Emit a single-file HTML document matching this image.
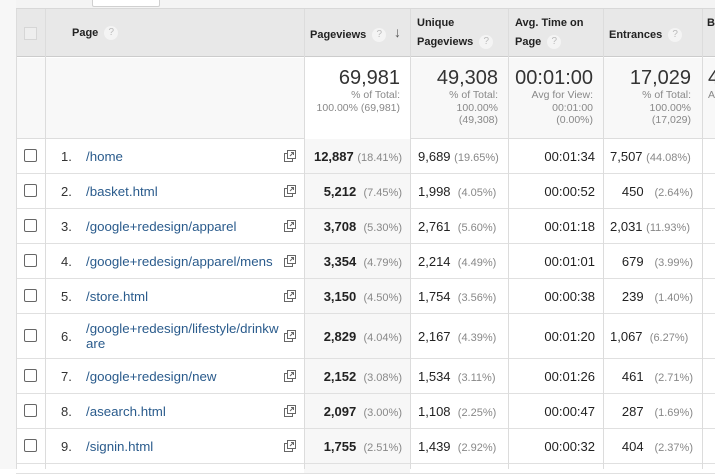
<!DOCTYPE html>
<html><head><meta charset="utf-8"><style>
*{box-sizing:border-box;margin:0;padding:0}
body{width:715px;height:469px;overflow:hidden;background:#fff;font-family:"Liberation Sans",Arial,sans-serif;position:relative;color:#222}
.a{position:absolute}
.hd{font-weight:bold;font-size:11px;color:#222;line-height:19px}
.q{display:inline-block;width:14px;height:14px;border-radius:50%;background:#f4f4f4;color:#bbb;font-size:10px;text-align:center;line-height:14px;font-weight:normal;vertical-align:middle;margin-left:6px}
.vl{position:absolute;top:9px;bottom:0;width:1px;background:#dcdcdc}
.row{position:absolute;left:16px;width:699px;border-bottom:1px solid #e0e0e0;font-size:13px}
.row>div{padding-top:1px}
.cb{position:absolute;left:8px;width:13px;height:13px;border:1px solid #666;border-radius:2px;background:#fff}
.n{position:absolute;left:45px;width:24px;color:#333}
.lk{position:absolute;left:70px;color:#2a5b8c;width:220px;line-height:15px;font-size:13.3px}
.ic{position:absolute;left:268px;width:12px;height:12px}
.pv{position:absolute;left:288px;width:106px;background:#f7f7f7;top:0;bottom:0}
.g{color:#888;font-size:11px}
.tn{font-size:20px;color:#333;text-align:right;line-height:22px}
.ts{font-size:10.5px;color:#888;text-align:right;line-height:12.5px}
</style></head><body>
<div class="a" style="left:0;top:0;width:16px;height:469px;background:#f7f7f7"></div>
<div class="a" style="left:16px;top:0;width:699px;height:9px;background:#f4f4f4;border-bottom:1px solid #d8d8d8"></div>
<div class="a" style="left:92px;top:-2px;width:68px;height:9px;border:1px solid #d0d0d0;border-radius:2px;background:#fff"></div>
<div class="a" style="left:16px;top:9px;width:699px;height:48px;background:#e8e8e8;border-bottom:1px solid #ccc"></div>
<div class="a" style="left:24px;top:27px;width:13px;height:13px;border:1px solid #d6d6d6;background:#eee"></div>
<div class="a hd" style="left:72px;top:24px">Page<span class="q">?</span></div>
<div class="a hd" style="left:310px;top:26px">Pageviews<span class="q">?</span></div>
<div class="a" style="left:394px;top:24px;font-size:14px;color:#555">&#8595;</div>
<div class="a hd" style="left:417px;top:14px">Unique<br>Pageviews<span class="q">?</span></div>
<div class="a hd" style="left:515px;top:14px">Avg. Time on<br>Page<span class="q">?</span></div>
<div class="a hd" style="left:609px;top:26px">Entrances<span class="q">?</span></div>
<div class="a hd" style="left:707px;top:14px">B</div>
<div class="a" style="left:16px;top:58px;width:699px;height:81px;background:#f8f8f8;border-bottom:1px solid #ddd"></div>
<div class="a" style="left:304px;top:58px;width:106px;height:81px;background:#fff"></div>
<div class="a" style="left:304px;top:67px;width:96px"><div class="tn">69,981</div><div class="ts">% of Total:<br>100.00% (69,981)</div></div>
<div class="a" style="left:410px;top:67px;width:88px"><div class="tn">49,308</div><div class="ts">% of Total:<br>100.00%<br>(49,308)</div></div>
<div class="a" style="left:508px;top:67px;width:85px"><div class="tn">00:01:00</div><div class="ts">Avg for View:<br>00:01:00<br>(0.00%)</div></div>
<div class="a" style="left:603px;top:67px;width:88px"><div class="tn">17,029</div><div class="ts">% of Total:<br>100.00%<br>(17,029)</div></div>
<div class="a" style="left:708px;top:67px"><div class="tn" style="text-align:left">4</div><div class="ts" style="text-align:left">A</div></div>

<svg width="0" height="0" style="position:absolute"><defs>
<symbol id="ext" viewBox="0 0 12 12"><rect x="0.5" y="3.5" width="8" height="8" fill="#fff" stroke="#666"/><rect x="3.5" y="0.5" width="8" height="8" fill="#fff" stroke="#666"/><path d="M6 6L9.5 2.5M7 2.5h2.5V5" stroke="#666" fill="none"/></symbol></defs></svg>

<div class="row" style="top:139px;height:35px;line-height:34px"><div class="pv"></div><div class="cb" style="top:10px"></div><div class="n">1.</div><div class="lk" style="top:0;line-height:34px">/home</div><svg class="ic" style="top:11px"><use href="#ext"/></svg>
<div class="a" style="left:288px;width:106px;text-align:right;padding-right:8px"><b>12,887</b> <span class="g">(18.41%)</span></div>
<div class="a" style="left:402px"><span>9,689</span> <span class="g">(19.65%)</span></div>
<div class="a" style="left:492px;width:87px;text-align:right">00:01:34</div>
<div class="a" style="left:594px"><span>7,507</span> <span class="g">(44.08%)</span></div></div>

<div class="row" style="top:174px;height:35px;line-height:34px"><div class="pv"></div><div class="cb" style="top:10px"></div><div class="n">2.</div><div class="lk" style="top:0;line-height:34px">/basket.html</div><svg class="ic" style="top:11px"><use href="#ext"/></svg>
<div class="a" style="left:288px;width:106px;text-align:right;padding-right:8px"><b>5,212</b> &nbsp;<span class="g">(7.45%)</span></div>
<div class="a" style="left:402px"><span>1,998</span> &nbsp;<span class="g">(4.05%)</span></div>
<div class="a" style="left:492px;width:87px;text-align:right">00:00:52</div>
<div class="a" style="left:587px;width:90px;text-align:right"><span>450</span> &nbsp;&nbsp;<span class="g">(2.64%)</span></div></div>

<div class="row" style="top:209px;height:35px;line-height:34px"><div class="pv"></div><div class="cb" style="top:10px"></div><div class="n">3.</div><div class="lk" style="top:0;line-height:34px">/google+redesign/apparel</div><svg class="ic" style="top:11px"><use href="#ext"/></svg>
<div class="a" style="left:288px;width:106px;text-align:right;padding-right:8px"><b>3,708</b> &nbsp;<span class="g">(5.30%)</span></div>
<div class="a" style="left:402px"><span>2,761</span> &nbsp;<span class="g">(5.60%)</span></div>
<div class="a" style="left:492px;width:87px;text-align:right">00:01:18</div>
<div class="a" style="left:594px"><span>2,031</span> <span class="g">(11.93%)</span></div></div>

<div class="row" style="top:244px;height:35px;line-height:34px"><div class="pv"></div><div class="cb" style="top:10px"></div><div class="n">4.</div><div class="lk" style="top:0;line-height:34px">/google+redesign/apparel/mens</div><svg class="ic" style="top:11px"><use href="#ext"/></svg>
<div class="a" style="left:288px;width:106px;text-align:right;padding-right:8px"><b>3,354</b> &nbsp;<span class="g">(4.79%)</span></div>
<div class="a" style="left:402px"><span>2,214</span> &nbsp;<span class="g">(4.49%)</span></div>
<div class="a" style="left:492px;width:87px;text-align:right">00:01:01</div>
<div class="a" style="left:587px;width:90px;text-align:right"><span>679</span> &nbsp;&nbsp;<span class="g">(3.99%)</span></div></div>

<div class="row" style="top:279px;height:35px;line-height:34px"><div class="pv"></div><div class="cb" style="top:10px"></div><div class="n">5.</div><div class="lk" style="top:0;line-height:34px">/store.html</div><svg class="ic" style="top:11px"><use href="#ext"/></svg>
<div class="a" style="left:288px;width:106px;text-align:right;padding-right:8px"><b>3,150</b> &nbsp;<span class="g">(4.50%)</span></div>
<div class="a" style="left:402px"><span>1,754</span> &nbsp;<span class="g">(3.56%)</span></div>
<div class="a" style="left:492px;width:87px;text-align:right">00:00:38</div>
<div class="a" style="left:587px;width:90px;text-align:right"><span>239</span> &nbsp;&nbsp;<span class="g">(1.40%)</span></div></div>

<div class="row" style="top:314px;height:45px;line-height:44px"><div class="pv"></div><div class="cb" style="top:15px"></div><div class="n">6.</div><div class="lk" style="top:6px;width:200px;white-space:nowrap">/google+redesign/lifestyle/drinkw<br>are</div><svg class="ic" style="top:16px"><use href="#ext"/></svg>
<div class="a" style="left:288px;width:106px;text-align:right;padding-right:8px"><b>2,829</b> &nbsp;<span class="g">(4.04%)</span></div>
<div class="a" style="left:402px"><span>2,167</span> &nbsp;<span class="g">(4.39%)</span></div>
<div class="a" style="left:492px;width:87px;text-align:right">00:01:20</div>
<div class="a" style="left:594px"><span>1,067</span> &nbsp;<span class="g">(6.27%)</span></div></div>

<div class="row" style="top:359px;height:35px;line-height:34px"><div class="pv"></div><div class="cb" style="top:10px"></div><div class="n">7.</div><div class="lk" style="top:0;line-height:34px">/google+redesign/new</div><svg class="ic" style="top:11px"><use href="#ext"/></svg>
<div class="a" style="left:288px;width:106px;text-align:right;padding-right:8px"><b>2,152</b> &nbsp;<span class="g">(3.08%)</span></div>
<div class="a" style="left:402px"><span>1,534</span> &nbsp;<span class="g">(3.11%)</span></div>
<div class="a" style="left:492px;width:87px;text-align:right">00:01:26</div>
<div class="a" style="left:587px;width:90px;text-align:right"><span>461</span> &nbsp;&nbsp;<span class="g">(2.71%)</span></div></div>

<div class="row" style="top:394px;height:35px;line-height:34px"><div class="pv"></div><div class="cb" style="top:10px"></div><div class="n">8.</div><div class="lk" style="top:0;line-height:34px">/asearch.html</div><svg class="ic" style="top:11px"><use href="#ext"/></svg>
<div class="a" style="left:288px;width:106px;text-align:right;padding-right:8px"><b>2,097</b> &nbsp;<span class="g">(3.00%)</span></div>
<div class="a" style="left:402px"><span>1,108</span> &nbsp;<span class="g">(2.25%)</span></div>
<div class="a" style="left:492px;width:87px;text-align:right">00:00:47</div>
<div class="a" style="left:587px;width:90px;text-align:right"><span>287</span> &nbsp;&nbsp;<span class="g">(1.69%)</span></div></div>

<div class="row" style="top:429px;height:35px;line-height:34px"><div class="pv"></div><div class="cb" style="top:10px"></div><div class="n">9.</div><div class="lk" style="top:0;line-height:34px">/signin.html</div><svg class="ic" style="top:11px"><use href="#ext"/></svg>
<div class="a" style="left:288px;width:106px;text-align:right;padding-right:8px"><b>1,755</b> &nbsp;<span class="g">(2.51%)</span></div>
<div class="a" style="left:402px"><span>1,439</span> &nbsp;<span class="g">(2.92%)</span></div>
<div class="a" style="left:492px;width:87px;text-align:right">00:00:32</div>
<div class="a" style="left:587px;width:90px;text-align:right"><span>404</span> &nbsp;&nbsp;<span class="g">(2.37%)</span></div></div>

<div class="row" style="top:464px;height:10px"><div class="pv"></div></div>

<div class="vl" style="left:16px"></div>
<div class="vl" style="left:45px"></div>
<div class="vl" style="left:304px"></div>
<div class="vl" style="left:410px"></div>
<div class="vl" style="left:508px"></div>
<div class="vl" style="left:603px"></div>
<div class="vl" style="left:702px"></div>
</body></html>
